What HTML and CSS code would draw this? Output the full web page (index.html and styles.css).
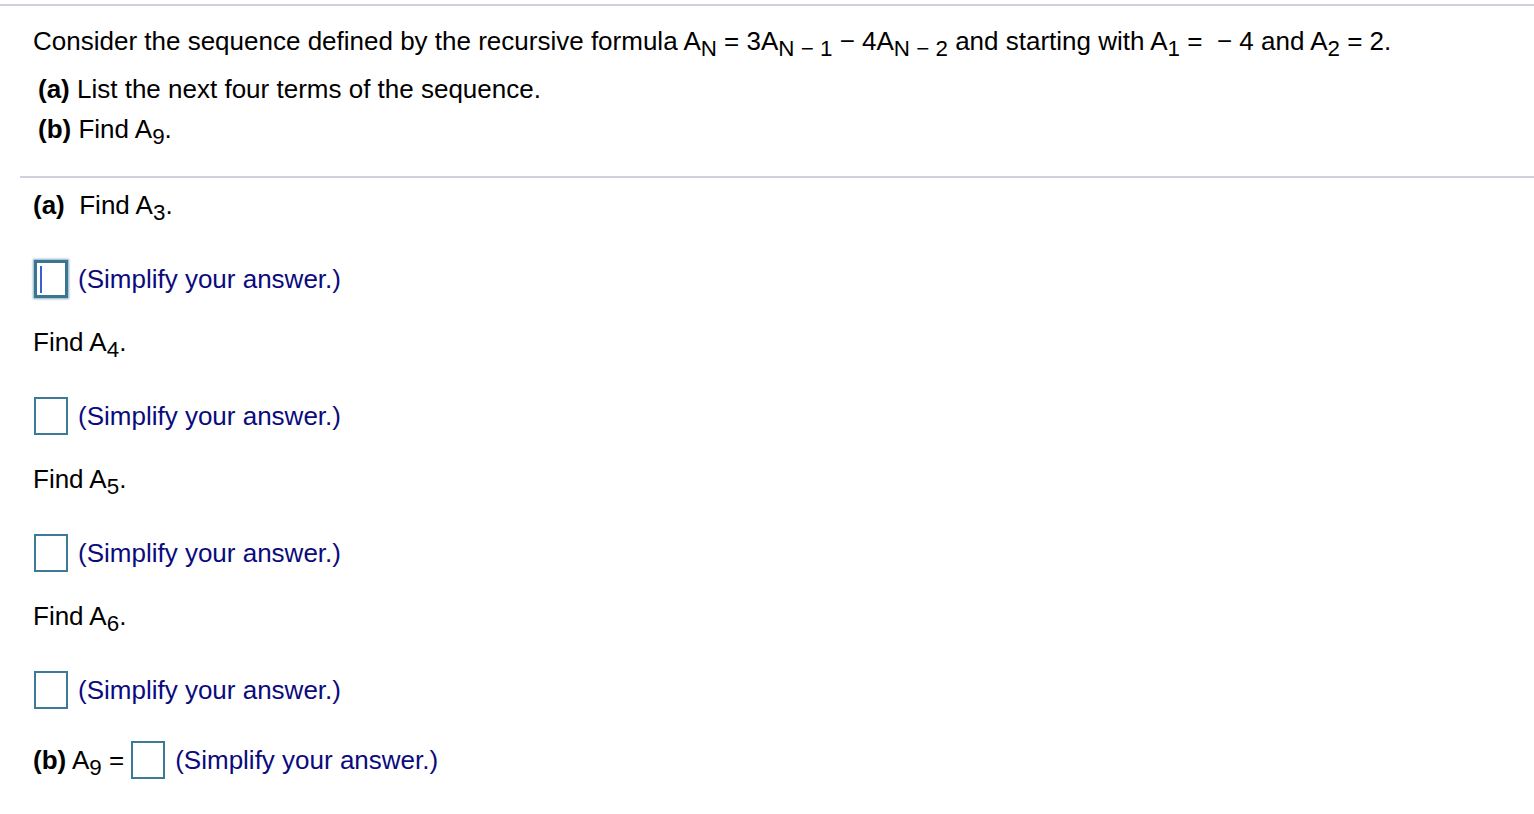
FILE: index.html
```html
<!DOCTYPE html>
<html>
<head>
<meta charset="utf-8">
<link rel="stylesheet" href="styles.css">
</head>
<body>
<div class="page">
  <div class="question">
    <p class="stem">Consider the sequence defined by the recursive formula A<sub>N</sub> = 3A<sub>N − 1</sub> − 4A<sub>N − 2</sub> and starting with A<sub>1</sub> = &nbsp;− 4 and A<sub>2</sub> = 2.</p>
    <p class="part"><b>(a)</b> List the next four terms of the sequence.</p>
    <p class="part"><b>(b)</b> Find A<sub>9</sub>.</p>
  </div>
  <div class="divider"></div>
  <div class="answers">
    <p class="prompt first"><b>(a)</b>&nbsp; Find A<sub>3</sub>.</p>
    <div class="answer-row"><span class="box focused"><span class="caret"></span></span><span class="hint">(Simplify your answer.)</span></div>
    <p class="prompt">Find A<sub>4</sub>.</p>
    <div class="answer-row"><span class="box"></span><span class="hint">(Simplify your answer.)</span></div>
    <p class="prompt">Find A<sub>5</sub>.</p>
    <div class="answer-row"><span class="box"></span><span class="hint">(Simplify your answer.)</span></div>
    <p class="prompt">Find A<sub>6</sub>.</p>
    <div class="answer-row"><span class="box"></span><span class="hint">(Simplify your answer.)</span></div>
    <div class="answer-row final"><span class="label"><b>(b)</b> A<sub>9</sub> =</span><span class="box"></span><span class="hint">(Simplify your answer.)</span></div>
  </div>
</div>
</body>
</html>
```

FILE: styles.css
```css
html, body {
  margin: 0;
  padding: 0;
  background: #ffffff;
}
body {
  font-family: "Liberation Sans", Arial, sans-serif;
  font-size: 26px;
  color: #000000;
}
.page {
  padding-top: 4px;
}
.question {
  border-top: 2px solid #d0d1dc;
  padding: 0 0 32px 33px;
}
.question .stem {
  margin: 20px 0 0 0;
  line-height: 30px;
}
.question .part {
  margin: 18px 0 0 5px;
  line-height: 30px;
}
.question .part + .part {
  margin-top: 10px;
}
sub {
  font-size: 0.86em;
  vertical-align: -6px;
  line-height: 0;
}
.divider {
  margin-left: 20px;
  height: 2px;
  background: #d0d1dc;
}
.answers {
  padding-left: 33px;
}
.prompt {
  margin: 0 0 40px 0;
  line-height: 30px;
}
.prompt.first {
  margin-top: 12px;
}
.answer-row {
  display: flex;
  align-items: center;
  gap: 10px;
  height: 38px;
  margin-bottom: 29px;
  line-height: 30px;
}
.answer-row.final {
  margin-top: 32px;
}
.box {
  box-sizing: border-box;
  flex: none;
  width: 34px;
  height: 38px;
  margin-left: 1px;
  border: 2px solid #3b7b97;
  background: #fff;
  position: relative;
}
.box.focused {
  border: 3px solid #3a7691;
  box-shadow: 0 0 2px 1px #87aec0;
}
.caret {
  position: absolute;
  left: 3px;
  top: 3px;
  width: 2px;
  height: 27px;
  background: #3d5ed0;
}
.hint {
  color: #0b0b7d;
}
.final .label {
  margin-right: -4px;
}
```
